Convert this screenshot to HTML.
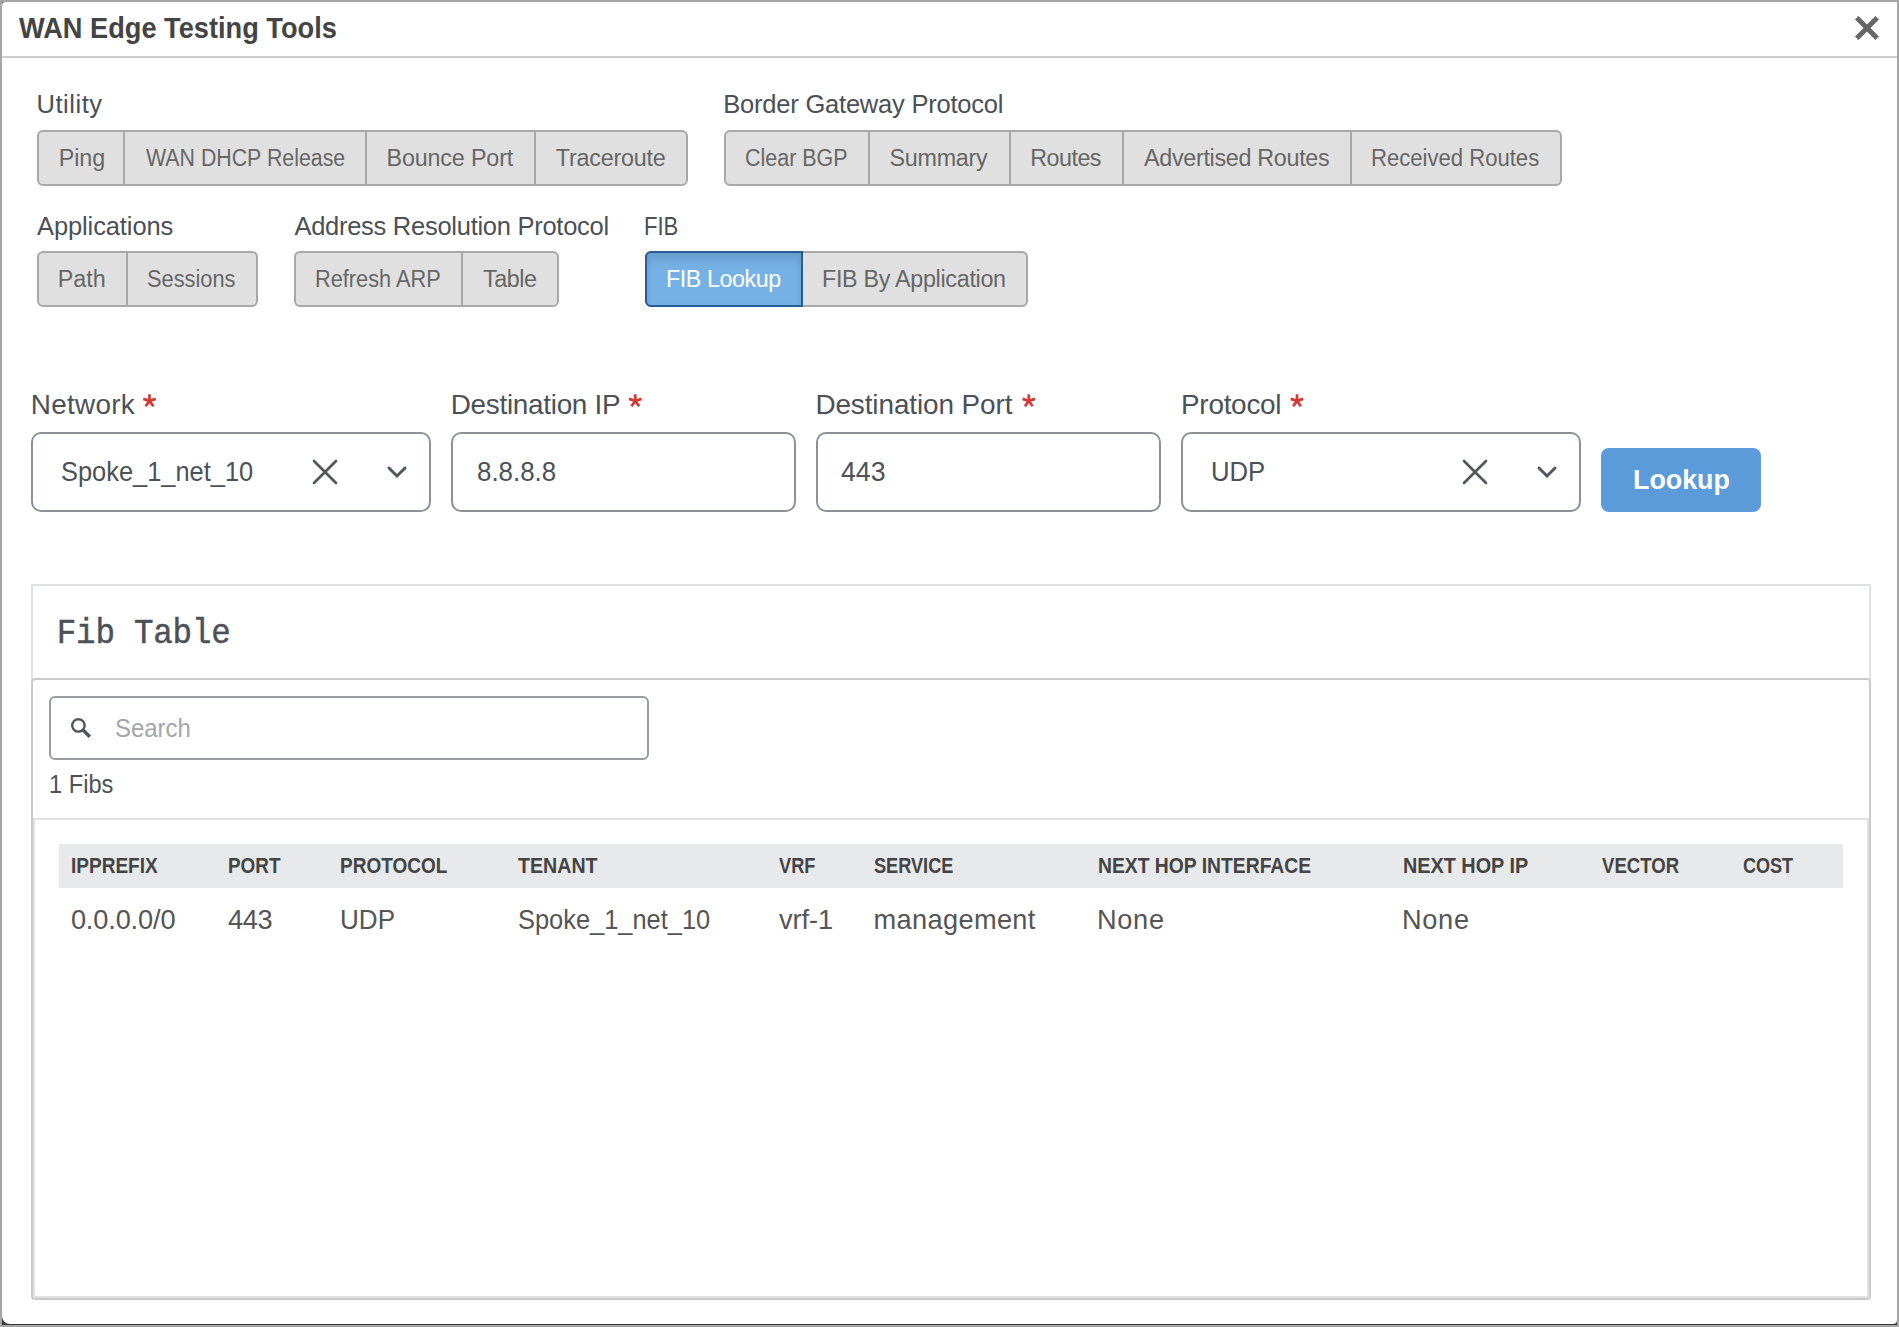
<!DOCTYPE html>
<html><head><meta charset="utf-8"><title>WAN Edge Testing Tools</title>
<style>html,body{margin:0;padding:0}body{width:1899px;height:1327px;overflow:hidden;position:relative;font-family:"Liberation Sans",sans-serif}</style>
</head><body>
<div style="position:absolute;left:0px;top:0px;width:1899px;height:1327px;background:#a6a6a6"></div>
<div style="position:absolute;left:2px;top:2px;width:1895px;height:1323px;background:#3a3a3a"></div>
<div style="position:absolute;left:2px;top:2px;width:1895px;height:1322px;background:#fff;border-radius:3px 0 4px 8px"></div>
<div style="position:absolute;left:19.0px;top:14.0px;font-family:'Liberation Sans',sans-serif;font-weight:700;font-size:29px;line-height:29px;letter-spacing:0px;color:#444;white-space:pre;transform:scaleX(0.9379);transform-origin:0 0;">WAN Edge Testing Tools</div>
<div style="position:absolute;left:2px;top:56px;width:1895px;height:2px;background:#cdcdcd"></div>
<div style="position:absolute;left:36.5px;top:92.0px;font-family:'Liberation Sans',sans-serif;font-weight:400;font-size:25.5px;line-height:25.5px;letter-spacing:0.533px;color:#4a5056;white-space:pre;">Utility</div>
<div style="position:absolute;left:723.3px;top:92.0px;font-family:'Liberation Sans',sans-serif;font-weight:400;font-size:25.5px;line-height:25.5px;letter-spacing:-0.214px;color:#4a5056;white-space:pre;">Border Gateway Protocol</div>
<div style="position:absolute;left:37.0px;top:214.0px;font-family:'Liberation Sans',sans-serif;font-weight:400;font-size:25.5px;line-height:25.5px;letter-spacing:-0.109px;color:#4a5056;white-space:pre;">Applications</div>
<div style="position:absolute;left:294.4px;top:214.0px;font-family:'Liberation Sans',sans-serif;font-weight:400;font-size:25.5px;line-height:25.5px;letter-spacing:-0.269px;color:#4a5056;white-space:pre;">Address Resolution Protocol</div>
<div style="position:absolute;left:644.2702702702703px;top:214.0px;font-family:'Liberation Sans',sans-serif;font-weight:400;font-size:25.5px;line-height:25.5px;letter-spacing:0px;color:#4a5056;white-space:pre;transform:scaleX(0.8649);transform-origin:0 0;">FIB</div>
<div style="position:absolute;left:37px;top:130px;width:647px;height:52px;background:#e0e0e0;border:2px solid #a8a8a8;border-radius:6px"></div>
<div style="position:absolute;left:123px;top:130px;width:2px;height:56px;background:#a8a8a8"></div>
<div style="position:absolute;left:365px;top:130px;width:2px;height:56px;background:#a8a8a8"></div>
<div style="position:absolute;left:534px;top:130px;width:2px;height:56px;background:#a8a8a8"></div>
<div style="position:absolute;left:724px;top:130px;width:834px;height:52px;background:#e0e0e0;border:2px solid #a8a8a8;border-radius:6px"></div>
<div style="position:absolute;left:868px;top:130px;width:2px;height:56px;background:#a8a8a8"></div>
<div style="position:absolute;left:1009px;top:130px;width:2px;height:56px;background:#a8a8a8"></div>
<div style="position:absolute;left:1122px;top:130px;width:2px;height:56px;background:#a8a8a8"></div>
<div style="position:absolute;left:1350px;top:130px;width:2px;height:56px;background:#a8a8a8"></div>
<div style="position:absolute;left:37px;top:251px;width:217px;height:52px;background:#e0e0e0;border:2px solid #a8a8a8;border-radius:6px"></div>
<div style="position:absolute;left:126px;top:251px;width:2px;height:56px;background:#a8a8a8"></div>
<div style="position:absolute;left:294px;top:251px;width:261px;height:52px;background:#e0e0e0;border:2px solid #a8a8a8;border-radius:6px"></div>
<div style="position:absolute;left:461px;top:251px;width:2px;height:56px;background:#a8a8a8"></div>
<div style="position:absolute;left:645px;top:251px;width:379px;height:52px;background:#e0e0e0;border:2px solid #a8a8a8;border-radius:6px"></div>
<div style="position:absolute;left:645px;top:251px;width:154px;height:52px;background:#76b1e6;border:2px solid #2a5b95;border-radius:6px 0 0 6px;box-shadow:inset 0 6px 10px rgba(0,0,0,.125)"></div>
<div style="position:absolute;left:58.7px;top:147.0px;font-family:'Liberation Sans',sans-serif;font-weight:400;font-size:23.3px;line-height:23.3px;letter-spacing:-0.067px;color:#666;white-space:pre;">Ping</div>
<div style="position:absolute;left:145.8px;top:147.0px;font-family:'Liberation Sans',sans-serif;font-weight:400;font-size:23.3px;line-height:23.3px;letter-spacing:0px;color:#666;white-space:pre;transform:scaleX(0.9157);transform-origin:0 0;">WAN DHCP Release</div>
<div style="position:absolute;left:386.5px;top:147.0px;font-family:'Liberation Sans',sans-serif;font-weight:400;font-size:23.3px;line-height:23.3px;letter-spacing:-0.15px;color:#666;white-space:pre;">Bounce Port</div>
<div style="position:absolute;left:555.8px;top:147.0px;font-family:'Liberation Sans',sans-serif;font-weight:400;font-size:23.3px;line-height:23.3px;letter-spacing:-0.211px;color:#666;white-space:pre;">Traceroute</div>
<div style="position:absolute;left:745.4779816513761px;top:147.0px;font-family:'Liberation Sans',sans-serif;font-weight:400;font-size:23.3px;line-height:23.3px;letter-spacing:0px;color:#666;white-space:pre;transform:scaleX(0.922);transform-origin:0 0;">Clear BGP</div>
<div style="position:absolute;left:889.5px;top:147.0px;font-family:'Liberation Sans',sans-serif;font-weight:400;font-size:23.3px;line-height:23.3px;letter-spacing:-0.25px;color:#666;white-space:pre;">Summary</div>
<div style="position:absolute;left:1030.3px;top:147.0px;font-family:'Liberation Sans',sans-serif;font-weight:400;font-size:23.3px;line-height:23.3px;letter-spacing:-0.52px;color:#666;white-space:pre;">Routes</div>
<div style="position:absolute;left:1144.0px;top:147.0px;font-family:'Liberation Sans',sans-serif;font-weight:400;font-size:23.3px;line-height:23.3px;letter-spacing:-0.294px;color:#666;white-space:pre;">Advertised Routes</div>
<div style="position:absolute;left:1370.904px;top:147.0px;font-family:'Liberation Sans',sans-serif;font-weight:400;font-size:23.3px;line-height:23.3px;letter-spacing:0px;color:#666;white-space:pre;transform:scaleX(0.948);transform-origin:0 0;">Received Routes</div>
<div style="position:absolute;left:57.7px;top:268.0px;font-family:'Liberation Sans',sans-serif;font-weight:400;font-size:23.3px;line-height:23.3px;letter-spacing:0.067px;color:#666;white-space:pre;">Path</div>
<div style="position:absolute;left:147.26451612903224px;top:268.0px;font-family:'Liberation Sans',sans-serif;font-weight:400;font-size:23.3px;line-height:23.3px;letter-spacing:0px;color:#666;white-space:pre;transform:scaleX(0.9355);transform-origin:0 0;">Sessions</div>
<div style="position:absolute;left:315.23333333333335px;top:268.0px;font-family:'Liberation Sans',sans-serif;font-weight:400;font-size:23.3px;line-height:23.3px;letter-spacing:0px;color:#666;white-space:pre;transform:scaleX(0.9333);transform-origin:0 0;">Refresh ARP</div>
<div style="position:absolute;left:483.0px;top:268.0px;font-family:'Liberation Sans',sans-serif;font-weight:400;font-size:23.3px;line-height:23.3px;letter-spacing:-0.45px;color:#666;white-space:pre;">Table</div>
<div style="position:absolute;left:822.0px;top:268.0px;font-family:'Liberation Sans',sans-serif;font-weight:400;font-size:23.3px;line-height:23.3px;letter-spacing:-0.294px;color:#666;white-space:pre;">FIB By Application</div>
<div style="position:absolute;left:666.0px;top:268.0px;font-family:'Liberation Sans',sans-serif;font-weight:400;font-size:23.3px;line-height:23.3px;letter-spacing:-0.444px;color:#fff;white-space:pre;">FIB Lookup</div>
<div style="position:absolute;left:30.700000000000003px;top:391.0px;font-family:'Liberation Sans',sans-serif;font-weight:400;font-size:27.9px;line-height:27.9px;letter-spacing:0.3px;color:#4b5157;white-space:pre;">Network</div>
<div style="position:absolute;left:450.7px;top:391.0px;font-family:'Liberation Sans',sans-serif;font-weight:400;font-size:27.9px;line-height:27.9px;letter-spacing:-0.285px;color:#4b5157;white-space:pre;">Destination IP</div>
<div style="position:absolute;left:815.4px;top:391.0px;font-family:'Liberation Sans',sans-serif;font-weight:400;font-size:27.9px;line-height:27.9px;letter-spacing:-0.093px;color:#4b5157;white-space:pre;">Destination Port</div>
<div style="position:absolute;left:1181.0px;top:391.0px;font-family:'Liberation Sans',sans-serif;font-weight:400;font-size:27.9px;line-height:27.9px;letter-spacing:-0.257px;color:#4b5157;white-space:pre;">Protocol</div>
<svg style="position:absolute;left:0;top:0" width="1899" height="600"><g stroke="#d33a33" stroke-width="2.7" stroke-linecap="butt"><line x1="149.5" y1="400.9" x2="149.50" y2="394.30"/><line x1="149.5" y1="400.9" x2="155.78" y2="398.86"/><line x1="149.5" y1="400.9" x2="153.38" y2="406.24"/><line x1="149.5" y1="400.9" x2="145.62" y2="406.24"/><line x1="149.5" y1="400.9" x2="143.22" y2="398.86"/><line x1="635.3" y1="400.9" x2="635.30" y2="394.30"/><line x1="635.3" y1="400.9" x2="641.58" y2="398.86"/><line x1="635.3" y1="400.9" x2="639.18" y2="406.24"/><line x1="635.3" y1="400.9" x2="631.42" y2="406.24"/><line x1="635.3" y1="400.9" x2="629.02" y2="398.86"/><line x1="1028.8" y1="400.9" x2="1028.80" y2="394.30"/><line x1="1028.8" y1="400.9" x2="1035.08" y2="398.86"/><line x1="1028.8" y1="400.9" x2="1032.68" y2="406.24"/><line x1="1028.8" y1="400.9" x2="1024.92" y2="406.24"/><line x1="1028.8" y1="400.9" x2="1022.52" y2="398.86"/><line x1="1297" y1="400.9" x2="1297.00" y2="394.30"/><line x1="1297" y1="400.9" x2="1303.28" y2="398.86"/><line x1="1297" y1="400.9" x2="1300.88" y2="406.24"/><line x1="1297" y1="400.9" x2="1293.12" y2="406.24"/><line x1="1297" y1="400.9" x2="1290.72" y2="398.86"/></g></svg>
<div style="position:absolute;left:31px;top:432px;width:396px;height:76px;border:2px solid #8e9297;border-radius:10px;background:#fff"></div>
<div style="position:absolute;left:451px;top:432px;width:341px;height:76px;border:2px solid #8e9297;border-radius:10px;background:#fff"></div>
<div style="position:absolute;left:816px;top:432px;width:341px;height:76px;border:2px solid #8e9297;border-radius:10px;background:#fff"></div>
<div style="position:absolute;left:1181px;top:432px;width:396px;height:76px;border:2px solid #8e9297;border-radius:10px;background:#fff"></div>
<div style="position:absolute;left:61.09238095238095px;top:458.0px;font-family:'Liberation Sans',sans-serif;font-weight:400;font-size:28px;line-height:28px;letter-spacing:0px;color:#4b5157;white-space:pre;transform:scaleX(0.9076);transform-origin:0 0;">Spoke_1_net_10</div>
<div style="position:absolute;left:477.275px;top:458.0px;font-family:'Liberation Sans',sans-serif;font-weight:400;font-size:28px;line-height:28px;letter-spacing:0px;color:#4b5157;white-space:pre;transform:scaleX(0.925);transform-origin:0 0;">8.8.8.8</div>
<div style="position:absolute;left:841.4466666666666px;top:458.0px;font-family:'Liberation Sans',sans-serif;font-weight:400;font-size:28px;line-height:28px;letter-spacing:0px;color:#4b5157;white-space:pre;transform:scaleX(0.9533);transform-origin:0 0;">443</div>
<div style="position:absolute;left:1210.564285714286px;top:458.0px;font-family:'Liberation Sans',sans-serif;font-weight:400;font-size:28px;line-height:28px;letter-spacing:0px;color:#4b5157;white-space:pre;transform:scaleX(0.9179);transform-origin:0 0;">UDP</div>
<div style="position:absolute;left:1601px;top:448px;width:160px;height:64px;background:#5b9bd9;border-radius:8px"></div>
<div style="position:absolute;left:1632.8030303030303px;top:465.0px;font-family:'Liberation Sans',sans-serif;font-weight:700;font-size:28.3px;line-height:28.3px;letter-spacing:0px;color:#fff;white-space:pre;transform:scaleX(0.9485);transform-origin:0 0;">Lookup</div>
<div style="position:absolute;left:31px;top:584px;width:1836px;height:96px;border:2px solid #e0e1e3;border-bottom:none"></div>
<div style="position:absolute;left:31px;top:678px;width:1836px;height:618px;border:2px solid #cacaca;border-radius:4px"></div>
<div style="position:absolute;left:56.8px;top:619.0px;font-family:'Liberation Mono',sans-serif;font-weight:400;font-size:32.5px;line-height:32.5px;letter-spacing:-0.2px;color:#4b5157;white-space:pre;transform:scaleY(1.08);transform-origin:0 24px;-webkit-text-stroke:0.45px #4b5157">Fib Table</div>
<div style="position:absolute;left:49px;top:696px;width:596px;height:60px;border:2px solid #9a9da0;border-radius:6px"></div>
<div style="position:absolute;left:114.75769230769231px;top:716.0px;font-family:'Liberation Sans',sans-serif;font-weight:400;font-size:25.4px;line-height:25.4px;letter-spacing:0px;color:#a3a6a9;white-space:pre;transform:scaleX(0.9423);transform-origin:0 0;">Search</div>
<div style="position:absolute;left:49.13939393939394px;top:772.0px;font-family:'Liberation Sans',sans-serif;font-weight:400;font-size:25.4px;line-height:25.4px;letter-spacing:0px;color:#4b5157;white-space:pre;transform:scaleX(0.9303);transform-origin:0 0;">1 Fibs</div>
<div style="position:absolute;left:33px;top:818px;width:1832px;height:476px;border:2px solid #e0e1e3;border-radius:0 0 3px 3px"></div>
<div style="position:absolute;left:59px;top:844px;width:1784px;height:44px;background:#e8e9eb"></div>
<div style="position:absolute;left:71.31855670103093px;top:855.0px;font-family:'Liberation Sans',sans-serif;font-weight:700;font-size:21.6px;line-height:21.6px;letter-spacing:0px;color:#444;white-space:pre;transform:scaleX(0.8814);transform-origin:0 0;">IPPREFIX</div>
<div style="position:absolute;left:228.42542372881357px;top:855.0px;font-family:'Liberation Sans',sans-serif;font-weight:700;font-size:21.6px;line-height:21.6px;letter-spacing:0px;color:#444;white-space:pre;transform:scaleX(0.8746);transform-origin:0 0;">PORT</div>
<div style="position:absolute;left:340.1206611570248px;top:855.0px;font-family:'Liberation Sans',sans-serif;font-weight:700;font-size:21.6px;line-height:21.6px;letter-spacing:0px;color:#444;white-space:pre;transform:scaleX(0.8793);transform-origin:0 0;">PROTOCOL</div>
<div style="position:absolute;left:518.0px;top:855.0px;font-family:'Liberation Sans',sans-serif;font-weight:700;font-size:21.6px;line-height:21.6px;letter-spacing:0px;color:#444;white-space:pre;transform:scaleX(0.9091);transform-origin:0 0;">TENANT</div>
<div style="position:absolute;left:779.2px;top:855.0px;font-family:'Liberation Sans',sans-serif;font-weight:700;font-size:21.6px;line-height:21.6px;letter-spacing:0px;color:#444;white-space:pre;transform:scaleX(0.8419);transform-origin:0 0;">VRF</div>
<div style="position:absolute;left:874.1591397849462px;top:855.0px;font-family:'Liberation Sans',sans-serif;font-weight:700;font-size:21.6px;line-height:21.6px;letter-spacing:0px;color:#444;white-space:pre;transform:scaleX(0.8409);transform-origin:0 0;">SERVICE</div>
<div style="position:absolute;left:1098.1059071729958px;top:855.0px;font-family:'Liberation Sans',sans-serif;font-weight:700;font-size:21.6px;line-height:21.6px;letter-spacing:0px;color:#444;white-space:pre;transform:scaleX(0.8941);transform-origin:0 0;">NEXT HOP INTERFACE</div>
<div style="position:absolute;left:1403.0822222222223px;top:855.0px;font-family:'Liberation Sans',sans-serif;font-weight:700;font-size:21.6px;line-height:21.6px;letter-spacing:0px;color:#444;white-space:pre;transform:scaleX(0.9178);transform-origin:0 0;">NEXT HOP IP</div>
<div style="position:absolute;left:1602.4px;top:855.0px;font-family:'Liberation Sans',sans-serif;font-weight:700;font-size:21.6px;line-height:21.6px;letter-spacing:0px;color:#444;white-space:pre;transform:scaleX(0.8607);transform-origin:0 0;">VECTOR</div>
<div style="position:absolute;left:1743.164406779661px;top:855.0px;font-family:'Liberation Sans',sans-serif;font-weight:700;font-size:21.6px;line-height:21.6px;letter-spacing:0px;color:#444;white-space:pre;transform:scaleX(0.8356);transform-origin:0 0;">COST</div>
<div style="position:absolute;left:70.9px;top:906.0px;font-family:'Liberation Sans',sans-serif;font-weight:400;font-size:27.2px;line-height:27.2px;letter-spacing:-0.15px;color:#555;white-space:pre;">0.0.0.0/0</div>
<div style="position:absolute;left:228.0px;top:906.0px;font-family:'Liberation Sans',sans-serif;font-weight:400;font-size:27.2px;line-height:27.2px;letter-spacing:-0.35px;color:#555;white-space:pre;">443</div>
<div style="position:absolute;left:339.5814814814815px;top:906.0px;font-family:'Liberation Sans',sans-serif;font-weight:400;font-size:27.2px;line-height:27.2px;letter-spacing:0px;color:#555;white-space:pre;transform:scaleX(0.9593);transform-origin:0 0;">UDP</div>
<div style="position:absolute;left:518.0651960784314px;top:906.0px;font-family:'Liberation Sans',sans-serif;font-weight:400;font-size:27.2px;line-height:27.2px;letter-spacing:0px;color:#555;white-space:pre;transform:scaleX(0.9348);transform-origin:0 0;">Spoke_1_net_10</div>
<div style="position:absolute;left:779.0px;top:906.0px;font-family:'Liberation Sans',sans-serif;font-weight:400;font-size:27.2px;line-height:27.2px;letter-spacing:-0.075px;color:#555;white-space:pre;">vrf-1</div>
<div style="position:absolute;left:873.6px;top:906.0px;font-family:'Liberation Sans',sans-serif;font-weight:400;font-size:27.2px;line-height:27.2px;letter-spacing:0.344px;color:#555;white-space:pre;">management</div>
<div style="position:absolute;left:1097.0px;top:906.0px;font-family:'Liberation Sans',sans-serif;font-weight:400;font-size:27.2px;line-height:27.2px;letter-spacing:0.667px;color:#555;white-space:pre;">None</div>
<div style="position:absolute;left:1402.0px;top:906.0px;font-family:'Liberation Sans',sans-serif;font-weight:400;font-size:27.2px;line-height:27.2px;letter-spacing:0.667px;color:#555;white-space:pre;">None</div>
<svg style="position:absolute;left:0;top:0" width="1899" height="1327"><g stroke="#666" stroke-width="5" stroke-linecap="butt"><line x1="1856.8" y1="17.8" x2="1877.2" y2="38.2"/><line x1="1877.2" y1="17.8" x2="1856.8" y2="38.2"/></g><g stroke="#50565c" stroke-width="2.6" stroke-linecap="round" fill="none"><line x1="314" y1="461" x2="336" y2="483"/><line x1="336" y1="461" x2="314" y2="483"/><polyline points="389,468 397,476 405,468" stroke-width="3"/><line x1="1464" y1="461" x2="1486" y2="483"/><line x1="1486" y1="461" x2="1464" y2="483"/><polyline points="1539,468 1547,476 1555,468" stroke-width="3"/></g><g stroke="#50565b" fill="none"><circle cx="78.4" cy="725.4" r="6.2" stroke-width="2.4"/><line x1="83.2" y1="730.2" x2="89.8" y2="736.8" stroke-linecap="butt" stroke-width="3.4"/></g></svg>
</body></html>
